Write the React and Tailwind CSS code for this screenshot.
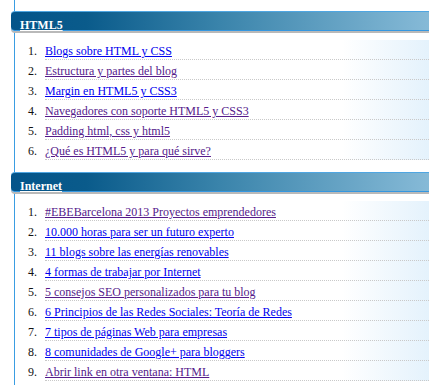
const sections = [
  {
    title: "HTML5",
    items: [
      ["Blogs sobre HTML y CSS", false],
      ["Estructura y partes del blog", true],
      ["Margin en HTML5 y CSS3", false],
      ["Navegadores con soporte HTML5 y CSS3", true],
      ["Padding html, css y html5", true],
      ["¿Qué es HTML5 y para qué sirve?", true],
    ],
  },
  {
    title: "Internet",
    items: [
      ["#EBEBarcelona 2013 Proyectos emprendedores", true],
      ["10.000 horas para ser un futuro experto", false],
      ["11 blogs sobre las energías renovables", false],
      ["4 formas de trabajar por Internet", false],
      ["5 consejos SEO personalizados para tu blog", true],
      ["6 Principios de las Redes Sociales: Teoría de Redes", false],
      ["7 tipos de páginas Web para empresas", false],
      ["8 comunidades de Google+ para bloggers", false],
      ["Abrir link en otra ventana: HTML", true],
    ],
  },
];

function Section({ title, items, first }) {
  return (
    <div className={first ? "pt-[11px]" : "pt-[12px]"}>
      <div className="-ml-[4px] h-[20px] rounded-l-[4px] border-t border-b border-t-[#4fa6e2] border-b-[#3597e0] bg-[linear-gradient(to_right,#03548a_0%,#0a5b8b_18%,#3a84ab_50%,#86bad7_100%)] pl-[9px] shadow-[0_2px_0_#b9b9b9]">
        <a href="#" className="text-[12px] font-bold leading-[18px] text-white underline">
          {title}
        </a>
      </div>
      <ol className="mt-[9px] bg-[linear-gradient(to_right,#ffffff_79%,#e4f2fc_100%)]">
        {items.map(([text, visited], i) => (
          <li key={text} className="flex h-[20px]">
            <span className="w-[22px] shrink-0 pt-[3px] text-right text-[12px] leading-4 text-[#111]">
              {i + 1}.
            </span>
            <div className="ml-[8px] flex-1 border-b border-dotted border-[#c9c9c9] pt-[3px] text-[12px] leading-4">
              <a
                href="#"
                className={`underline ${visited ? "text-[#551a8b]" : "text-[#0000ee]"}`}
              >
                {text}
              </a>
            </div>
          </li>
        ))}
      </ol>
    </div>
  );
}

export default function App() {
  return (
    <div className="h-[385px] w-[429px] overflow-hidden bg-white pl-[14px] font-['Liberation_Serif',serif]">
      <div className="h-full border-l border-[#3a9de2]">
        {sections.map((s, i) => (
          <Section key={s.title} title={s.title} items={s.items} first={i === 0} />
        ))}
      </div>
    </div>
  );
}
